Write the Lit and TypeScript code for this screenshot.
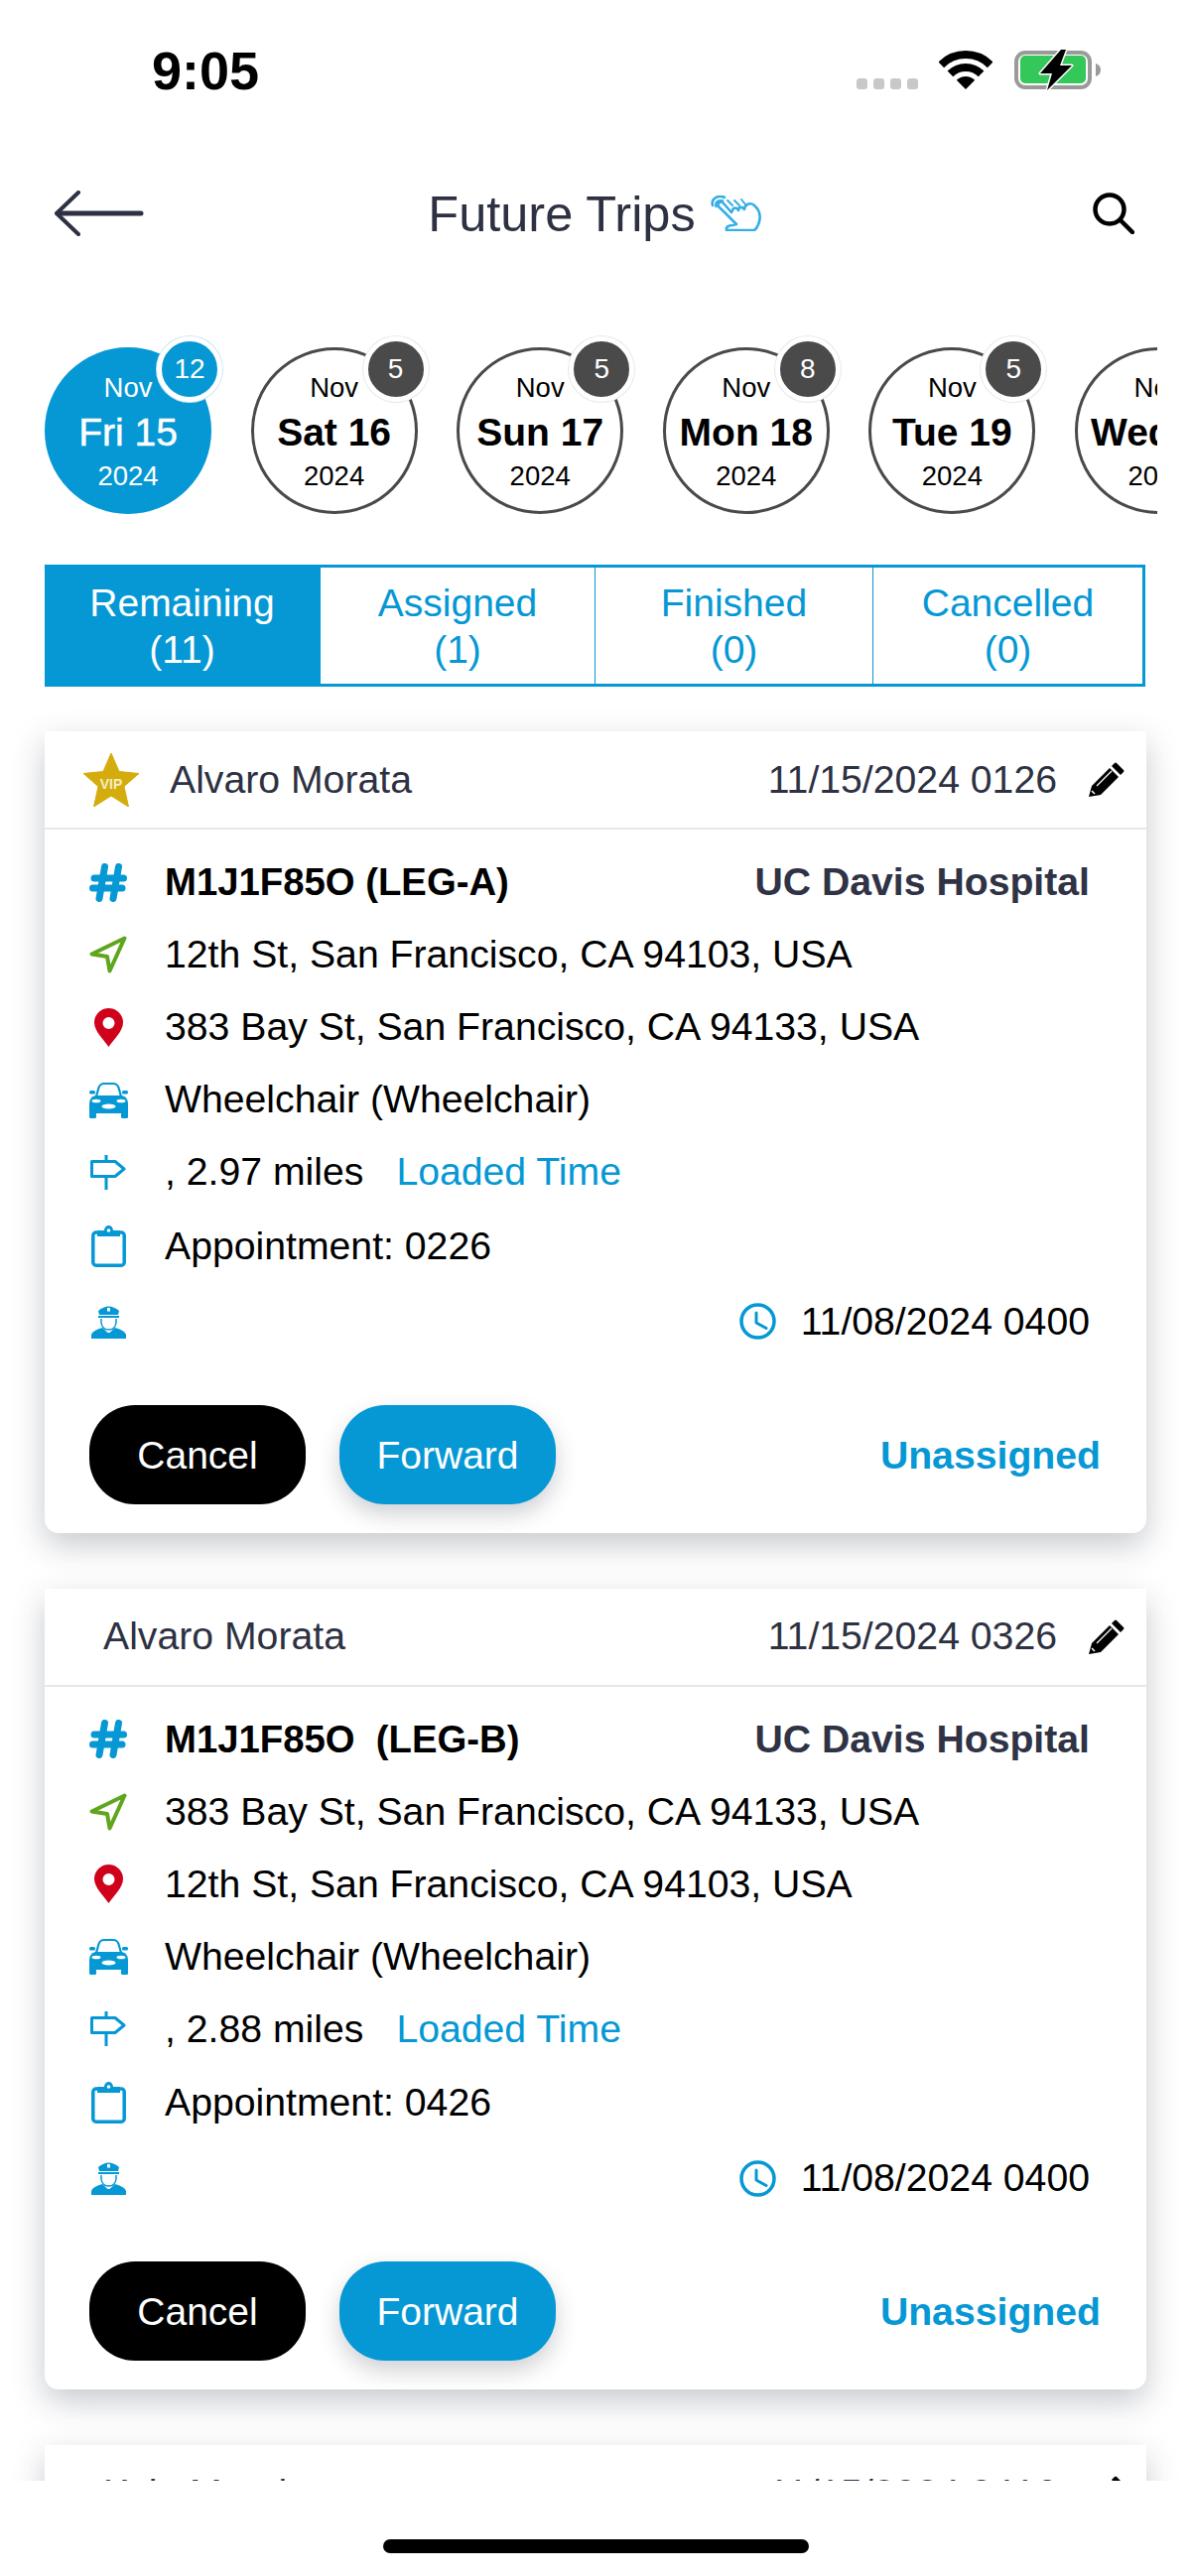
import { css, html, LitElement } from 'lit';
import { customElement } from 'lit/decorators.js';

const DAYS = [
  { label: 'Fri 15', count: 12, active: true },
  { label: 'Sat 16', count: 5 },
  { label: 'Sun 17', count: 5 },
  { label: 'Mon 18', count: 8 },
  { label: 'Tue 19', count: 5 },
  { label: 'Wed 20', count: 5 },
];

const TABS = [
  { label: 'Remaining', count: 11, active: true },
  { label: 'Assigned', count: 1 },
  { label: 'Finished', count: 0 },
  { label: 'Cancelled', count: 0 },
];

const TRIPS = [
  {
    vip: true,
    name: 'Alvaro Morata',
    time: '11/15/2024 0126',
    code: 'M1J1F85O (LEG-A)',
    from: '12th St, San Francisco, CA 94103, USA',
    to: '383 Bay St, San Francisco, CA 94133, USA',
    miles: ', 2.97 miles',
    appt: 'Appointment: 0226',
  },
  {
    name: 'Alvaro Morata',
    time: '11/15/2024 0326',
    code: 'M1J1F85O\u00a0 (LEG-B)',
    from: '383 Bay St, San Francisco, CA 94133, USA',
    to: '12th St, San Francisco, CA 94103, USA',
    miles: ', 2.88 miles',
    appt: 'Appointment: 0426',
  },
  {
    name: 'Kyle Morales',
    time: '11/15/2024 0416',
    code: 'M1J1F85O (LEG-A)',
    from: '12th St, San Francisco, CA 94103, USA',
    to: '383 Bay St, San Francisco, CA 94133, USA',
    miles: ', 2.97 miles',
    appt: 'Appointment: 0516',
  },
];

const BLUE = '#0598d5';

const icons = {
  back: html`<svg width="90" height="46" viewBox="0 0 90 46" fill="none" stroke="#2d3142" stroke-linecap="round" stroke-linejoin="round">
    <path d="M3 23H87" stroke-width="5" />
    <path d="M24 2L2 23L24 44" stroke-width="4" />
  </svg>`,
  search: html`<svg width="42" height="42" viewBox="0 0 42 42" fill="none" stroke="#000" stroke-width="4.5" stroke-linecap="round">
    <circle cx="17" cy="17" r="14.5" />
    <path d="M28 28L40 40" />
  </svg>`,
  hand: html`<svg width="51" height="36" viewBox="0 0 51 36" fill="none" stroke="#35aee6" stroke-width="2.6" stroke-linejoin="round" stroke-linecap="round">
    <path d="M2 10C0 3 8-1 14 2" />
    <path d="M5.500 11C4.500 7 8 4.500 12 5.500" />
    <path d="M8 8C9 6 12 6 13 8L21 17L23 13C25 12 27 13 28 15C28 11 32 11 34 14C34 10 39 6 44 10C50 15 52 24 46 33L44 35H16C15 32 18 30 22 30L26 29L10 13C8 12 7 10 8 8Z" />
    <path d="M17 5L22 10M24 5L29 10M31 4L35 9" stroke-width="2" />
  </svg>`,
  wifi: html`<svg width="54" height="39" viewBox="0 0 54 39">
    <path d="M2.3 14.3A35 35 0 0 1 51.7 14.3" fill="none" stroke="#000" stroke-width="8" />
    <path d="M11.4 23.4A22 22 0 0 1 42.6 23.4" fill="none" stroke="#000" stroke-width="8" />
    <path d="M27 39L17.8 29.8A13 13 0 0 1 36.2 29.8Z" fill="#000" />
  </svg>`,
  battery: html`<svg width="87" height="43" viewBox="0 0 87 43">
    <rect x="2" y="4" width="74" height="35" rx="9" fill="none" stroke="#9a9a9a" stroke-width="4" />
    <rect x="6" y="7" width="66" height="28" rx="5" fill="#34c759" />
    <path d="M82 15C85 16 87 18 87 21.500C87 25 85 27 82 28Z" fill="#9a9a9a" />
    <path d="M47 1L26 25H38L33 42L58 17H46L52 1Z" fill="#000" stroke="#fff" stroke-width="3" stroke-linejoin="round" paint-order="stroke" />
  </svg>`,
  star: html`<svg width="56" height="54" viewBox="0 0 56 54">
    <path d="M28 0L36 18.500L56 20.500L41 33.500L45.500 54L28 43L10.500 54L15 33.500L0 20.500L20 18.500Z" fill="#d4ac0d" stroke="#d4ac0d" stroke-linejoin="round" />
    <text x="28" y="36" text-anchor="middle" font-family="Liberation Sans" font-size="14" font-weight="700" fill="#f6edc4">VIP</text>
  </svg>`,
  pencil: html`<svg width="36" height="35" viewBox="0 0 36 35">
    <path d="M0 35L3 24L21 6L30 15L12 33Z" fill="#000" />
    <path d="M23 4L26 1Q27 0 28 1L35 8Q36 9 35 10L32 13Z" fill="#000" />
    <path d="M8 24L23 9" stroke="#fff" stroke-width="1.2" />
    <path d="M3 29L6 32" stroke="#fff" stroke-width="1.5" />
  </svg>`,
  hash: html`<svg width="38" height="39" viewBox="0 0 38 39" fill="none" stroke="${BLUE}" stroke-width="7" stroke-linecap="round">
    <path d="M15.500 3.500L10 35.500" />
    <path d="M29.500 3.500L24 35.500" />
    <path d="M5 15H34.500" />
    <path d="M3.500 25H33" />
  </svg>`,
  nav: html`<svg width="38" height="38" viewBox="0 0 38 38" fill="none" stroke="#5fa51e" stroke-width="4" stroke-linejoin="round">
    <path d="M35.500 2.500L2.500 18.500L18 21L20.500 35.500Z" />
  </svg>`,
  pin: html`<svg width="29" height="39" viewBox="0 0 29 39">
    <path fill-rule="evenodd" d="M14.500 39C9 31 0 23 0 14.500A14.500 14.500 0 0 1 29 14.500C29 23 20 31 14.500 39ZM14.500 9A6 6 0 1 0 14.500 21A6 6 0 1 0 14.500 9Z" fill="#d0021b" />
  </svg>`,
  car: html`<svg width="39" height="37" viewBox="0 0 39 37">
    <path d="M7 15L9.500 6Q11 2 15 2H24Q28 2 29.500 6L32 15" fill="none" stroke="${BLUE}" stroke-width="2.2" />
    <rect x="0" y="9" width="6" height="3.500" rx="1.500" fill="${BLUE}" />
    <rect x="33" y="9" width="6" height="3.500" rx="1.500" fill="${BLUE}" />
    <path d="M0 22Q0 16 6 14H33Q39 16 39 22V32H0Z" fill="${BLUE}" />
    <ellipse cx="7" cy="19.500" rx="4.500" ry="1.800" fill="#fff" />
    <ellipse cx="32" cy="19.500" rx="4.500" ry="1.800" fill="#fff" />
    <ellipse cx="19.500" cy="25" rx="7" ry="2.500" fill="#fff" />
    <rect x="0" y="31" width="7" height="6" rx="1.500" fill="${BLUE}" />
    <rect x="32" y="31" width="7" height="6" rx="1.500" fill="${BLUE}" />
  </svg>`,
  sign: html`<svg width="36" height="35" viewBox="0 0 36 35" fill="none" stroke="${BLUE}" stroke-width="3">
    <path d="M1.500 6.500H25L34 14L25 21.500H1.500Z" stroke-linejoin="round" />
    <path d="M16 0V6.500M16 21.500V35" stroke-linecap="round" />
  </svg>`,
  clipboard: html`<svg width="35" height="42" viewBox="0 0 35 42">
    <rect x="1.800" y="7" width="31.400" height="33.200" rx="3" fill="none" stroke="${BLUE}" stroke-width="3.500" />
    <path d="M6 5H13C13 2 15 0 17.500 0C20 0 22 2 22 5H29V11H6Z" fill="${BLUE}" />
    <circle cx="17.500" cy="5" r="1.800" fill="#fff" />
  </svg>`,
  driver: html`<svg width="35" height="34" viewBox="0 0 35 34">
    <path d="M7 6Q17.500-3 28 6L27 10H8Z" fill="${BLUE}" />
    <rect x="16" y="3" width="3" height="3.500" fill="#fff" />
    <rect x="7" y="11" width="21" height="2" fill="${BLUE}" />
    <path d="M10 14V18Q11 25 17.500 25Q24 25 25 18V14" fill="none" stroke="${BLUE}" stroke-width="1.5" />
    <path d="M0 34V30Q1 26 11 23L16.500 28H18.500L24 23Q34 26 35 30V34Z" fill="${BLUE}" />
  </svg>`,
  clock: html`<svg width="37" height="37" viewBox="0 0 37 37" fill="none" stroke="${BLUE}">
    <circle cx="18.500" cy="18.500" r="16.500" stroke-width="3.500" />
    <path d="M17 10V20L27 25.500" stroke-width="3" stroke-linecap="round" stroke-linejoin="round" />
  </svg>`,
};

@customElement('app-root')
export class AppRoot extends LitElement {
  static styles = css`
    :host {
      display: block;
      width: 1200px;
      height: 2596px;
      overflow: hidden;
      background: #fff;
      font-family: 'Liberation Sans', Arial, sans-serif;
      color: #000;
    }

    svg {
      display: block;
      flex: none;
    }

    .status {
      display: flex;
      align-items: flex-end;
      height: 92px;
      padding: 0 91px 0 153px;
      margin-bottom: 8px;
    }

    .time {
      font-size: 54px;
      font-weight: 700;
      line-height: 54px;
      margin-right: auto;
      margin-bottom: -6px;
    }

    .dots {
      display: flex;
      gap: 6px;
      margin: 0 21px 2px 0;
    }

    .dots i {
      width: 11px;
      height: 11px;
      border-radius: 3px;
      background: #c8c8c8;
    }

    .wifi {
      margin: 0 22px 2px 0;
    }

    .nav {
      display: grid;
      grid-template-columns: 1fr auto 1fr;
      align-items: center;
      height: 230px;
      padding: 0 57px 0 55px;
    }

    .nav .search {
      justify-self: end;
    }

    .title {
      display: flex;
      align-items: center;
      gap: 15px;
      font-size: 50.5px;
      color: #2d3142;
    }

    .days {
      display: flex;
      gap: 39.6px;
      width: 1121px;
      margin-left: 45px;
      padding-top: 20px;
      overflow: hidden;
    }

    .day {
      position: relative;
      flex: none;
      width: 168px;
      height: 168px;
      box-sizing: border-box;
      border: 3px solid #4a4a4a;
      border-radius: 50%;
      padding-top: 16px;
      text-align: center;
      font-size: 27.5px;
      line-height: 44.5px;
    }

    .day b {
      display: block;
      font-size: 39px;
    }

    .day.active {
      border-color: #0598d5;
      background: #0598d5;
      color: #fff;
    }

    .day.active b {
      font-weight: 400;
      -webkit-text-stroke: 0.5px #fff;
    }

    .badge {
      position: absolute;
      top: -14px;
      left: 110px;
      width: 66px;
      height: 66px;
      box-sizing: border-box;
      border: 5px solid #fff;
      border-radius: 50%;
      box-shadow: 0 0 0 1px #e8e8e8;
      background: #4a4a4a;
      color: #fff;
      font-size: 28px;
      line-height: 56px;
      text-align: center;
    }

    .day.active .badge {
      background: #0598d5;
      box-shadow: 0 0 0 1px #c9e8f6;
    }

    .tabs {
      display: grid;
      grid-template-columns: 274px 277px 280px 1fr;
      height: 123px;
      margin: 51px 46px 0 45px;
      box-sizing: border-box;
      border: 3px solid #0598d5;
    }

    .tab {
      display: flex;
      flex-direction: column;
      align-items: center;
      justify-content: center;
      border-left: 1.5px solid #0598d5;
      font-size: 39px;
      line-height: 47px;
      color: #0598d5;
    }

    .tab:first-child {
      border-left: 0;
      padding-right: 3px;
    }

    .tab.active {
      background: #0598d5;
      color: #fff;
    }

    .list {
      display: flex;
      flex-direction: column;
      gap: 56px;
      height: 1808px;
      box-sizing: border-box;
      padding: 45px 45px 0;
      overflow: hidden;
    }

    .card {
      flex: none;
      background: #fff;
      border-radius: 0 0 14px 14px;
      box-shadow: 0 12px 32px rgba(40, 45, 65, 0.26);
    }

    .head {
      display: flex;
      align-items: center;
      height: 97px;
      padding: 0 22px 0 59px;
      border-bottom: 2px solid #e8e8e8;
      font-size: 39.2px;
      color: #2d3142;
    }

    .head.vip {
      padding-left: 39px;
    }

    .head.vip svg:first-child {
      margin-right: 31px;
    }

    .head .when {
      margin: 0 32px 0 auto;
    }

    .body {
      padding: 16.5px 57px 0 45px;
    }

    .row {
      display: flex;
      align-items: center;
      height: 73px;
      font-size: 39.2px;
      white-space: nowrap;
    }

    .row.tall {
      height: 76px;
    }

    .ico {
      display: flex;
      justify-content: center;
      width: 38px;
      margin-right: 38px;
    }

    .code {
      font-size: 38.3px;
      font-weight: 700;
    }

    .site {
      margin-left: auto;
      font-weight: 700;
      color: #2f3345;
    }

    .link {
      margin-left: 33px;
      color: #0598d5;
    }

    .stamp {
      display: flex;
      align-items: center;
      gap: 25px;
      margin-left: auto;
    }

    .actions {
      display: flex;
      align-items: center;
      gap: 34px;
      padding: 46px 46px 29px 45px;
    }

    .btn {
      width: 218px;
      height: 100px;
      border-radius: 46px;
      background: #000;
      color: #fff;
      font-size: 39px;
      line-height: 101px;
      text-align: center;
    }

    .btn.forward {
      background: #0598d5;
      box-shadow: 0 10px 22px rgba(40, 45, 65, 0.22);
    }

    .state {
      margin: 2px 0 0 auto;
      font-size: 39.2px;
      font-weight: 700;
      color: #0598d5;
    }

    .home {
      position: relative;
      height: 96px;
      box-sizing: border-box;
      padding-top: 59px;
      background: #fff;
    }

    .home i {
      display: block;
      width: 429px;
      height: 14px;
      margin-left: 386px;
      border-radius: 7px;
      background: #000;
    }
  `;

  private renderTrip(t: (typeof TRIPS)[number]) {
    return html`<div class="card">
      <div class="head ${t.vip ? 'vip' : ''}">
        ${t.vip ? icons.star : ''}
        <span>${t.name}</span>
        <span class="when">${t.time}</span>
        ${icons.pencil}
      </div>
      <div class="body">
        <div class="row">
          <span class="ico">${icons.hash}</span>
          <span class="code">${t.code}</span>
          <span class="site">UC Davis Hospital</span>
        </div>
        <div class="row"><span class="ico">${icons.nav}</span>${t.from}</div>
        <div class="row"><span class="ico">${icons.pin}</span>${t.to}</div>
        <div class="row"><span class="ico">${icons.car}</span>Wheelchair (Wheelchair)</div>
        <div class="row">
          <span class="ico">${icons.sign}</span>${t.miles}
          <span class="link">Loaded Time</span>
        </div>
        <div class="row tall"><span class="ico">${icons.clipboard}</span>${t.appt}</div>
        <div class="row tall">
          <span class="ico">${icons.driver}</span>
          <span class="stamp">${icons.clock}11/08/2024 0400</span>
        </div>
      </div>
      <div class="actions">
        <div class="btn">Cancel</div>
        <div class="btn forward">Forward</div>
        <div class="state">Unassigned</div>
      </div>
    </div>`;
  }

  render() {
    return html`
      <div class="status">
        <div class="time">9:05</div>
        <div class="dots"><i></i><i></i><i></i><i></i></div>
        <div class="wifi">${icons.wifi}</div>
        ${icons.battery}
      </div>
      <div class="nav">
        ${icons.back}
        <div class="title">Future Trips ${icons.hand}</div>
        <div class="search">${icons.search}</div>
      </div>
      <div class="days">
        ${DAYS.map(
          (d) => html`<div class="day ${d.active ? 'active' : ''}">
            Nov<b>${d.label}</b>2024
            <div class="badge">${d.count}</div>
          </div>`,
        )}
      </div>
      <div class="tabs">
        ${TABS.map(
          (t) => html`<div class="tab ${t.active ? 'active' : ''}">
            <span>${t.label}</span><span>(${t.count})</span>
          </div>`,
        )}
      </div>
      <div class="list">${TRIPS.map((t) => this.renderTrip(t))}</div>
      <div class="home"><i></i></div>
    `;
  }
}
